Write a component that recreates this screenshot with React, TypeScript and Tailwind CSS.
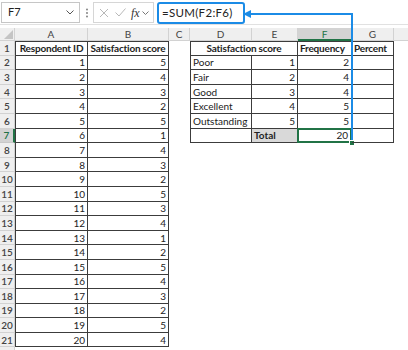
import React from "react";

const FONT = { fontFamily: "Lato, 'Noto Sans', 'Liberation Sans', sans-serif" };

const W = [15, 73, 81, 21, 62, 46, 54, 42];
const colLetters = ["A", "B", "C", "D", "E", "F", "G"];
const aVals = Array.from({ length: 20 }, (_, i) => i + 1);
const bVals = [5, 4, 3, 2, 5, 1, 4, 3, 2, 5, 3, 4, 1, 2, 5, 4, 3, 2, 5, 4];
const t2: [string, string, string][] = [
  ["Poor", "1", "2"],
  ["Fair", "2", "4"],
  ["Good", "3", "4"],
  ["Excellent", "4", "5"],
  ["Outstanding", "5", "5"],
];

function Cell({
  w,
  children,
  cls = "",
}: {
  w: number;
  children?: React.ReactNode;
  cls?: string;
}) {
  return (
    <div
      className={"relative box-border shrink-0 h-full flex items-center overflow-visible whitespace-nowrap " + cls}
      style={{ width: w }}
    >
      {children}
    </div>
  );
}

function RowHeader({ n, selected }: { n: number; selected?: boolean }) {
  return (
    <Cell
      w={W[0]}
      cls={
        selected
          ? "justify-center bg-[#d3d3d3] text-[#217346] border-b border-r-2 border-b-[#c8c8c8] border-r-[#217346] font-semibold"
          : "justify-center bg-[#efefef] text-[#444] border-b border-r border-[#d2d2d2] font-semibold"
      }
    >
      <span className="text-[10px] leading-none">{n}</span>
    </Cell>
  );
}

export default function App() {
  const rows: React.ReactNode[] = [];
  for (let r = 1; r <= 21; r++) {
    const cells: React.ReactNode[] = [];
    cells.push(<RowHeader key="h" n={r} selected={r === 7} />);
    if (r === 1) {
      cells.push(
        <Cell key="a" w={W[1]} cls={"border border-[#3c3c3c] justify-center font-bold tracking-[-0.2px]"}>
          Respondent ID
        </Cell>
      );
      cells.push(
        <Cell key="b" w={W[2]} cls={"border-t border-r border-b border-[#3c3c3c] justify-center font-bold tracking-[-0.2px]"}>
          Satisfaction score
        </Cell>
      );
    } else {
      cells.push(
        <Cell key="a" w={W[1]} cls={"border-l border-r border-b border-[#3c3c3c] justify-end pr-[2px]"}>
          {aVals[r - 2]}
        </Cell>
      );
      cells.push(
        <Cell key="b" w={W[2]} cls={"border-r border-b border-[#3c3c3c] justify-end pr-[2px]"}>
          {bVals[r - 2]}
        </Cell>
      );
    }
    cells.push(<Cell key="c" w={W[3]} />);
    if (r === 1) {
      cells.push(
        <Cell key="de" w={W[4] + W[5]} cls={"border border-[#3c3c3c] justify-center font-bold tracking-[-0.2px]"}>
          Satisfaction score
        </Cell>
      );
      cells.push(
        <Cell key="f" w={W[6]} cls={"border-t border-r border-b border-[#3c3c3c] justify-start pl-[2px] font-bold tracking-[-0.2px]"}>
          Frequency
        </Cell>
      );
      cells.push(
        <Cell key="g" w={W[7]} cls={"border-t border-r border-b border-[#3c3c3c] justify-start pl-[2px] font-bold tracking-[-0.2px]"}>
          Percent
        </Cell>
      );
    } else if (r <= 6) {
      const d = t2[r - 2];
      cells.push(
        <Cell key="d" w={W[4]} cls={"border-l border-r border-b border-[#3c3c3c] justify-start pl-[2px]"}>
          {d[0]}
        </Cell>
      );
      cells.push(
        <Cell key="e" w={W[5]} cls={"border-r border-b border-[#3c3c3c] justify-end pr-[2px]"}>
          {d[1]}
        </Cell>
      );
      cells.push(
        <Cell key="f" w={W[6]} cls={"border-r border-b border-[#3c3c3c] justify-end pr-[2px]"}>
          {d[2]}
        </Cell>
      );
      cells.push(<Cell key="g" w={W[7]} cls={"border-r border-b border-[#3c3c3c]"} />);
    } else if (r === 7) {
      cells.push(<Cell key="d" w={W[4]} cls={"border-l border-r border-b border-[#3c3c3c]"} />);
      cells.push(
        <Cell key="e" w={W[5]} cls={"border-r border-b border-[#3c3c3c] bg-[#d9d9d9] justify-start pl-[2px] font-bold"}>
          Total
        </Cell>
      );
      cells.push(
        <Cell key="f" w={W[6]} cls={"border-r border-b border-[#3c3c3c] justify-end pr-[3px]"}>
          20
          <div className="absolute -left-px -top-px -right-px -bottom-px border-2 border-[#217346]" />
          <div className="absolute -right-[4px] -bottom-[4px] w-[6px] h-[6px] bg-[#217346] border border-white" />
        </Cell>
      );
      cells.push(<Cell key="g" w={W[7]} cls={"border-r border-b border-[#3c3c3c]"} />);
    } else {
      cells.push(<Cell key="d" w={W[4]} />);
      cells.push(<Cell key="e" w={W[5]} />);
      cells.push(<Cell key="f" w={W[6]} />);
      cells.push(<Cell key="g" w={W[7]} />);
    }
    rows.push(
      <div key={r} className="flex h-[14.6px] text-[10px] text-[#222] leading-none">
        {cells}
      </div>
    );
  }

  return (
    <div className="relative w-[408px] h-[350px] bg-white overflow-hidden" style={FONT}>
      {/* formula bar */}
      <div className="flex items-center h-[25px] pt-[1px] border-b border-[#e1e1e1]">
        <div className="ml-[1px] w-[79px] h-[21px] border border-[#c6c6c6] flex items-center justify-between pl-[6px] pr-[5px] text-[11px] text-[#222]">
          <span>F7</span>
          <svg width="8" height="5" viewBox="0 0 8 5">
            <path d="M0.5 0.5 L4 4 L7.5 0.5" fill="none" stroke="#555" strokeWidth="1" />
          </svg>
        </div>
        <div className="w-[13px] flex justify-center">
          <svg width="2" height="10" viewBox="0 0 2 10">
            <circle cx="1" cy="1.5" r="0.9" fill="#777" />
            <circle cx="1" cy="5" r="0.9" fill="#777" />
            <circle cx="1" cy="8.5" r="0.9" fill="#777" />
          </svg>
        </div>
        <div className="w-[61px] h-[21px] border border-[#d6d6d6] flex items-center pl-[5px] gap-[6px]">
          <svg width="10" height="10" viewBox="0 0 10 10">
            <path d="M1 1 L9 9 M9 1 L1 9" stroke="#b8b8b8" strokeWidth="1" />
          </svg>
          <svg width="11" height="9" viewBox="0 0 11 9">
            <path d="M0.5 4.5 L4 8 L10.5 0.5" fill="none" stroke="#b8b8b8" strokeWidth="1" />
          </svg>
          <span
            className="text-[12px] italic text-[#333] leading-none -ml-[1px]"
            style={{ fontFamily: "'Liberation Serif', serif" }}
          >
            fx
          </span>
          <svg width="7" height="4" viewBox="0 0 7 4" className="-ml-[4px]">
            <path d="M0.5 0.5 L3.5 3.5 L6.5 0.5" fill="none" stroke="#777" strokeWidth="1" />
          </svg>
        </div>
        <div className="ml-[3px] w-[88px] h-[22px] border-2 border-[#1b8be6] rounded-[3px] flex items-center pl-[3px] text-[11.5px] text-[#222] tracking-[0.3px]">
          =SUM(F2:F6)
        </div>
      </div>

      {/* column headers */}
      <div className="mt-[3px] flex h-[13px] text-[10px] text-[#444] leading-none">
        <div className="relative w-[15px] h-full bg-[#efefef] border-r border-b border-[#d2d2d2]">
          <svg className="absolute right-[1px] bottom-[1px]" width="9" height="9" viewBox="0 0 9 9">
            <path d="M9 0 L9 9 L0 9 Z" fill="#c4c4c4" />
          </svg>
        </div>
        {colLetters.map((c, i) => (
          <div
            key={c}
            className={
              c === "F"
                ? "h-full flex items-center justify-center bg-[#d3d3d3] text-[#217346] border-r border-[#c8c8c8] border-b-2 border-b-[#217346]"
                : "h-full flex items-center justify-center bg-[#efefef] border-r border-b border-[#d2d2d2]"
            }
            style={{ width: W[i + 1] }}
          >
            {c}
          </div>
        ))}
        <div className="flex-1 h-full bg-[#efefef] border-b border-[#d2d2d2]" />
      </div>

      {/* rows */}
      <div className="flex flex-col">{rows}</div>
      <div className="flex h-[10px]">
        <div className="w-[15px] h-full bg-[#efefef] border-r border-[#d2d2d2]" />
      </div>

      {/* trace arrow */}
      <svg className="absolute left-0 top-0 pointer-events-none" width="408" height="350" viewBox="0 0 408 350">
        <polyline points="249,14 352,14 352,140" fill="none" stroke="#1b8be6" strokeWidth="2" />
        <polygon points="243,14 251,10 251,18" fill="#1b8be6" />
      </svg>
    </div>
  );
}
